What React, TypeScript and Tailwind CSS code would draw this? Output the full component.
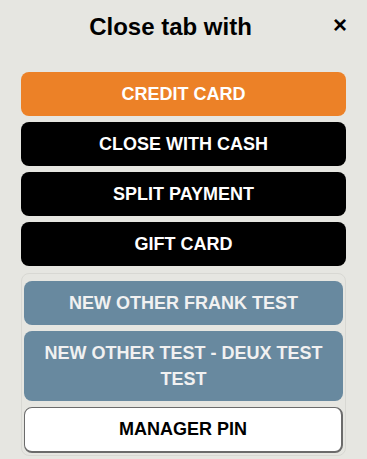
export default function App() {
  const primary = ["CLOSE WITH CASH", "SPLIT PAYMENT", "GIFT CARD"];
  const others = ["NEW OTHER FRANK TEST", "NEW OTHER TEST - DEUX TEST TEST"];

  return (
    <div
      className="min-h-[459px] w-[367px] bg-[#e6e6e1] px-[21px] pb-4"
      style={{ fontFamily: '"Liberation Sans", Arial, sans-serif' }}
    >
      <div className="relative flex h-[54px] items-center justify-center pr-[26px]">
        <h1 className="text-[24px] font-bold text-black">Close tab with</h1>
        <button className="absolute right-[-1px] top-[13px] text-[24px] font-bold leading-none text-black">
          ×
        </button>
      </div>

      <div className="mt-[18px] flex flex-col gap-[6px]">
        <button className="h-[44px] rounded-lg bg-[#ec8127] text-[18px] font-bold text-white">
          CREDIT CARD
        </button>
        {primary.map((label) => (
          <button
            key={label}
            className="h-[44px] rounded-lg bg-black text-[18px] font-bold text-white"
          >
            {label}
          </button>
        ))}

        <div className="mt-[1px] flex flex-col gap-[6px] rounded-lg border border-[#d8d8d3] p-[2px] pt-[7px]">
          {others.map((label) => (
            <button
              key={label}
              className="min-h-[44px] rounded-lg bg-[#68899f] px-5 py-[9px] text-[18px] font-bold leading-[26px] text-[#f1f1f1]"
            >
              {label}
            </button>
          ))}
          <button className="h-[46px] rounded-lg border border-[#6b6b6b] border-b-2 border-r-2 bg-white text-[18px] font-bold text-black">
            MANAGER PIN
          </button>
        </div>
      </div>
    </div>
  );
}
